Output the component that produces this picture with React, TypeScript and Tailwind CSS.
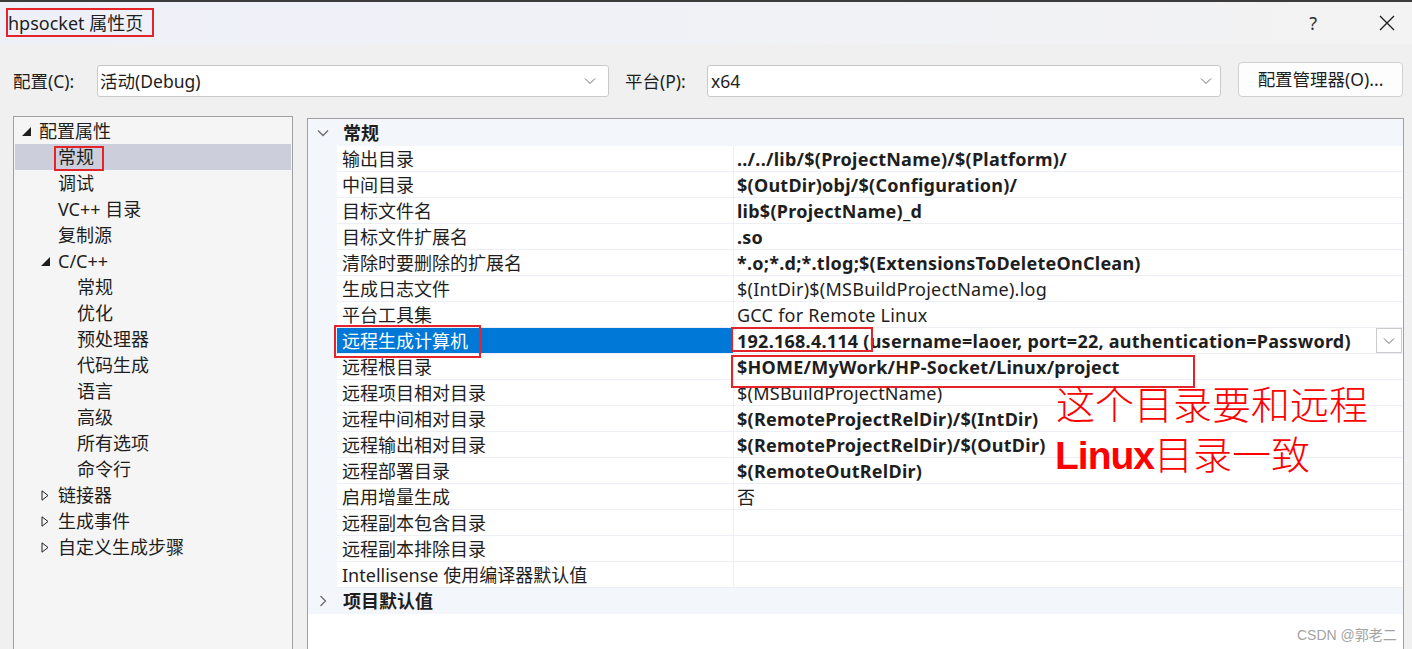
import React from 'react';

type TreeItem = { label: string; level: number; arrow?: 'open' | 'closed'; selected?: boolean };

const treeItems: TreeItem[] = [
  { label: '配置属性', level: 0, arrow: 'open' },
  { label: '常规', level: 1, selected: true },
  { label: '调试', level: 1 },
  { label: 'VC++ 目录', level: 1 },
  { label: '复制源', level: 1 },
  { label: 'C/C++', level: 1, arrow: 'open' },
  { label: '常规', level: 2 },
  { label: '优化', level: 2 },
  { label: '预处理器', level: 2 },
  { label: '代码生成', level: 2 },
  { label: '语言', level: 2 },
  { label: '高级', level: 2 },
  { label: '所有选项', level: 2 },
  { label: '命令行', level: 2 },
  { label: '链接器', level: 1, arrow: 'closed' },
  { label: '生成事件', level: 1, arrow: 'closed' },
  { label: '自定义生成步骤', level: 1, arrow: 'closed' },
];

const props = [
  { name: '输出目录', value: '../../lib/$(ProjectName)/$(Platform)/', bold: true },
  { name: '中间目录', value: '$(OutDir)obj/$(Configuration)/', bold: true },
  { name: '目标文件名', value: 'lib$(ProjectName)_d', bold: true },
  { name: '目标文件扩展名', value: '.so', bold: true },
  { name: '清除时要删除的扩展名', value: '*.o;*.d;*.tlog;$(ExtensionsToDeleteOnClean)', bold: true },
  { name: '生成日志文件', value: '$(IntDir)$(MSBuildProjectName).log' },
  { name: '平台工具集', value: 'GCC for Remote Linux' },
  { name: '远程生成计算机', value: '192.168.4.114 (username=laoer, port=22, authentication=Password)', bold: true, selected: true },
  { name: '远程根目录', value: '$HOME/MyWork/HP-Socket/Linux/project', bold: true },
  { name: '远程项目相对目录', value: '$(MSBuildProjectName)' },
  { name: '远程中间相对目录', value: '$(RemoteProjectRelDir)/$(IntDir)', bold: true },
  { name: '远程输出相对目录', value: '$(RemoteProjectRelDir)/$(OutDir)', bold: true },
  { name: '远程部署目录', value: '$(RemoteOutRelDir)', bold: true },
  { name: '启用增量生成', value: '否' },
  { name: '远程副本包含目录', value: '' },
  { name: '远程副本排除目录', value: '' },
  { name: 'Intellisense 使用编译器默认值', value: '' },
];

const Chevron = ({ dir }: { dir: 'down' | 'right' }) => (
  <svg width="14" height="14" viewBox="0 0 14 14" fill="none" stroke="#6b6b6b" strokeWidth="1.3">
    {dir === 'down' ? <path d="M2 4.5 L7 9.5 L12 4.5" /> : <path d="M4.5 2 L9.5 7 L4.5 12" />}
  </svg>
);

const SmallDown = () => (
  <svg width="12" height="8" viewBox="0 0 12 8" fill="none" stroke="#707070" strokeWidth="1">
    <path d="M1 1.5 L6 6.5 L11 1.5" />
  </svg>
);

const TreeArrow = ({ kind }: { kind: 'open' | 'closed' }) =>
  kind === 'open' ? (
    <svg width="9" height="9" viewBox="0 0 9 9">
      <polygon points="9,0 9,9 0,9" fill="#1e1e1e" />
    </svg>
  ) : (
    <svg width="8" height="11" viewBox="0 0 8 11">
      <polygon points="1,0.8 7,5.5 1,10.2" fill="none" stroke="#1e1e1e" strokeWidth="1" />
    </svg>
  );

const App = () => {
  return (
    <div className="relative w-[1412px] h-[649px] overflow-hidden bg-[#f0f0f0] text-[#1e1e1e] font-['Noto_Sans','Noto_Sans_CJK_SC',sans-serif]">
      {/* Title bar */}
      <div className="h-[2px] bg-[#3c3c3c]" />
      <div className="h-[42px] flex items-center bg-gradient-to-r from-[#eef0f9] to-[#f3f3f3]">
        <span className="pl-[8px] text-[18px] leading-none">hpsocket 属性页</span>
        <div className="ml-auto flex items-center">
          <span className="text-[18px] leading-none text-[#333]">?</span>
          <div className="ml-[62px] mr-[17px]">
            <svg width="16" height="16" viewBox="0 0 16 16" stroke="#222" strokeWidth="1.4">
              <path d="M1 1 L15 15 M15 1 L1 15" />
            </svg>
          </div>
        </div>
      </div>

      {/* Configuration row */}
      <div className="mt-[18px] flex items-end pl-[13px] text-[17.5px]">
        <div className="w-[84px] h-[32px] flex items-center">配置(C):</div>
        <div className="w-[512px] h-[32px] flex items-center bg-white border border-[#c9c9c9] rounded-[3px] pl-[2px] pr-[12px]">
          <span>活动(Debug)</span>
          <span className="ml-auto"><SmallDown /></span>
        </div>
        <div className="ml-[16px] w-[82px] h-[32px] flex items-center">平台(P):</div>
        <div className="w-[514px] h-[32px] flex items-center bg-white border border-[#c9c9c9] rounded-[3px] pl-[3px] pr-[8px]">
          <span>x64</span>
          <span className="ml-auto"><SmallDown /></span>
        </div>
        <div className="ml-[17px] w-[165px] h-[35px] flex items-center justify-center bg-[#fdfdfd] border border-[#d0d0d0] rounded-[4px]">
          配置管理器(O)...
        </div>
      </div>

      {/* Panels */}
      <div className="mt-[19px] flex items-start pl-[13px] text-[18px]">
        {/* Tree */}
        <div className="w-[280px] h-[560px] border border-[#a0a0a0] bg-[#f5f5f5] pt-px">
          {treeItems.map((item, i) => (
            <div
              key={i}
              className={`h-[26px] flex items-center mx-px ${item.selected ? 'bg-[#cccedb]' : ''} ${
                item.level === 0 ? 'pl-[7px]' : item.level === 1 ? 'pl-[26px]' : 'pl-[45px]'
              }`}
            >
              <span className="w-[17px] flex items-center">{item.arrow && <TreeArrow kind={item.arrow} />}</span>
              <span className="leading-none">{item.label}</span>
            </div>
          ))}
        </div>

        {/* Property grid */}
        <div className="ml-[14px] mt-[2px] w-[1097px] h-[560px] border border-[#a0a0a0] bg-white">
          <div className="h-[27px] flex items-center bg-[#f3f6fb]">
            <span className="w-[29px] flex justify-center pl-px"><Chevron dir="down" /></span>
            <span className="pl-[6px] font-bold leading-none">常规</span>
          </div>
          {props.map((p, i) => (
            <div key={i} className="h-[26px] flex">
              <div className="w-[29px] bg-[#f3f6fb]" />
              <div
                className={`w-[396px] flex items-center pl-[5px] border-b border-[#eceff5] ${
                  p.selected ? 'bg-[#0078d7] text-white border-[#0078d7]' : ''
                }`}
              >
                <span className="leading-none">{p.name}</span>
              </div>
              <div className="flex-1 flex items-center pl-[3px] border-b border-l border-[#eceff5]">
                <span className={`leading-none whitespace-nowrap tracking-[0.25px] ${p.bold ? 'font-bold' : ''}`}>{p.value}</span>
                {p.selected && (
                  <div className="ml-auto mr-px w-[26px] h-[25px] flex items-center justify-center border border-[#cccccc] bg-white">
                    <SmallDown />
                  </div>
                )}
              </div>
            </div>
          ))}
          <div className="h-[26px] flex items-center bg-[#f3f6fb]">
            <span className="w-[29px] flex justify-center pl-px"><Chevron dir="right" /></span>
            <span className="pl-[6px] font-bold leading-none">项目默认值</span>
          </div>
        </div>
      </div>

      {/* Annotations */}
      <div className="absolute left-[6px] top-[8px] w-[148px] h-[29px] border-2 border-[#e3242b]" />
      <div className="absolute left-[54px] top-[146px] w-[50px] h-[25px] border-2 border-[#e3242b]" />
      <div className="absolute left-[334px] top-[325px] w-[147px] h-[33px] border-2 border-[#e3242b]" />
      <div className="absolute left-[731px] top-[327px] w-[142px] h-[25px] border-2 border-[#e3242b]" />
      <div className="absolute left-[731px] top-[355px] w-[464px] h-[33px] border-2 border-[#e3242b]" />
      <div className="absolute left-[1056px] top-[382px] flex flex-col gap-[10px] text-[39px] leading-[40px] text-[#ff0000]">
        <div className="font-['Noto_Sans_CJK_SC',serif] font-light">这个目录要和远程</div>
        <div className="flex items-baseline -ml-px">
          <span className="font-['Liberation_Sans',sans-serif] font-bold tracking-[-1px]">Linux</span>
          <span className="font-['Noto_Sans_CJK_SC',serif] font-light">目录一致</span>
        </div>
      </div>
      <div className="absolute left-[1297px] top-[625px] text-[14px] text-[#a3a3a3] font-['Liberation_Sans','Noto_Sans_CJK_SC',sans-serif]">
        CSDN @郭老二
      </div>
    </div>
  );
};

export default App;
